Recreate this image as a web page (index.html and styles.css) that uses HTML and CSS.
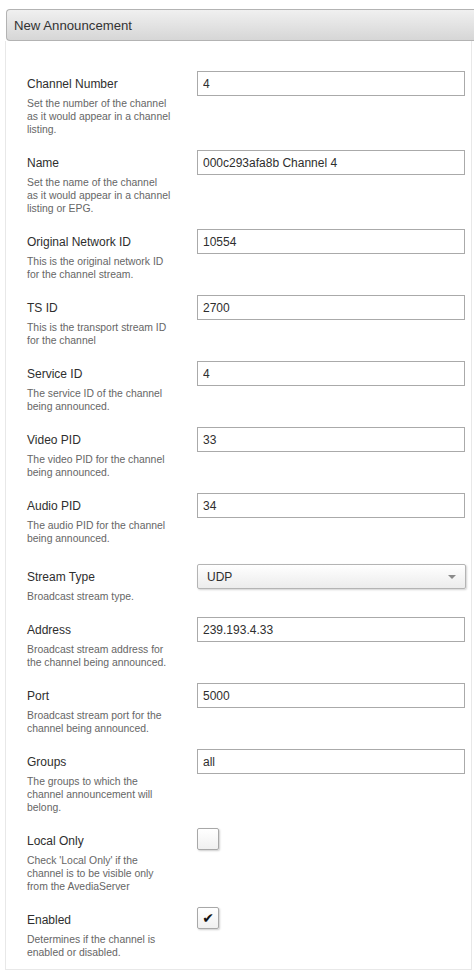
FILE: index.html
```html
<!DOCTYPE html>
<html>
<head>
<meta charset="utf-8">
<link rel="stylesheet" href="styles.css">
</head>
<body>
<div class="page">
  <div class="header">New Announcement</div>
  <div class="panel">
    <div class="row">
      <div class="info"><div class="label">Channel Number</div><div class="desc">Set the number of the channel<br>as it would appear in a channel<br>listing.</div></div>
      <input class="field" type="text" value="4">
    </div>
    <div class="row">
      <div class="info"><div class="label">Name</div><div class="desc">Set the name of the channel<br>as it would appear in a channel<br>listing or EPG.</div></div>
      <input class="field" type="text" value="000c293afa8b Channel 4">
    </div>
    <div class="row">
      <div class="info"><div class="label">Original Network ID</div><div class="desc">This is the original network ID<br>for the channel stream.</div></div>
      <input class="field" type="text" value="10554">
    </div>
    <div class="row">
      <div class="info"><div class="label">TS ID</div><div class="desc">This is the transport stream ID<br>for the channel</div></div>
      <input class="field" type="text" value="2700">
    </div>
    <div class="row">
      <div class="info"><div class="label">Service ID</div><div class="desc">The service ID of the channel<br>being announced.</div></div>
      <input class="field" type="text" value="4">
    </div>
    <div class="row">
      <div class="info"><div class="label">Video PID</div><div class="desc">The video PID for the channel<br>being announced.</div></div>
      <input class="field" type="text" value="33">
    </div>
    <div class="row">
      <div class="info"><div class="label">Audio PID</div><div class="desc">The audio PID for the channel<br>being announced.</div></div>
      <input class="field" type="text" value="34">
    </div>
    <div class="row row-select">
      <div class="info"><div class="label">Stream Type</div><div class="desc">Broadcast stream type.</div></div>
      <div class="select"><span class="select-text">UDP</span><span class="arrow"></span></div>
    </div>
    <div class="row">
      <div class="info"><div class="label">Address</div><div class="desc">Broadcast stream address for<br>the channel being announced.</div></div>
      <input class="field" type="text" value="239.193.4.33">
    </div>
    <div class="row">
      <div class="info"><div class="label">Port</div><div class="desc">Broadcast stream port for the<br>channel being announced.</div></div>
      <input class="field" type="text" value="5000">
    </div>
    <div class="row">
      <div class="info"><div class="label">Groups</div><div class="desc">The groups to which the<br>channel announcement will<br>belong.</div></div>
      <input class="field" type="text" value="all">
    </div>
    <div class="row">
      <div class="info"><div class="label">Local Only</div><div class="desc">Check 'Local Only' if the<br>channel is to be visible only<br>from the AvediaServer</div></div>
      <span class="check"></span>
    </div>
    <div class="row">
      <div class="info"><div class="label">Enabled</div><div class="desc">Determines if the channel is<br>enabled or disabled.</div></div>
      <span class="check">✔</span>
    </div>
  </div>
</div>
</body>
</html>
```

FILE: styles.css
```css
html, body {
  margin: 0;
  padding: 0;
  background: #ffffff;
  overflow: hidden;
  font-family: "Liberation Sans", Arial, sans-serif;
}

.page {
  padding: 9px 0 0 5px;
}

.header {
  height: 32px;
  box-sizing: border-box;
  margin-left: 1px;
  margin-right: -12px;
  border: 1px solid #b3b3b3;
  border-right: none;
  border-radius: 4px 0 0 4px;
  background: linear-gradient(#f0f0f0, #d6d6d6);
  display: flex;
  align-items: center;
  padding-left: 7px;
  font-size: 13.2px;
  color: #333333;
}

.panel {
  width: 467px;
  box-sizing: border-box;
  border: 1px solid #e8e8e8;
  border-top: none;
  padding: 30px 0 10px 21px;
  display: flex;
  flex-direction: column;
  gap: 14px;
}

.row {
  display: flex;
  align-items: flex-start;
}

.row-select {
  margin-top: 5px;
}

.info {
  width: 170px;
  flex: none;
  white-space: nowrap;
}

.label {
  margin-top: 5px;
  font-size: 12px;
  line-height: 16px;
  color: #2e2e2e;
}

.desc {
  margin-top: 5px;
  font-size: 10.4px;
  line-height: 13px;
  color: #666666;
}

.field {
  width: 268px;
  height: 25px;
  box-sizing: border-box;
  margin: 0;
  border: 1px solid #aaaaaa;
  border-radius: 0;
  padding: 0 5px;
  font-family: "Liberation Sans", Arial, sans-serif;
  font-size: 12px;
  color: #2e2e2e;
  background: #ffffff;
  outline: none;
}

.select {
  width: 269px;
  height: 25px;
  box-sizing: border-box;
  border: 1px solid #b4b4b4;
  border-radius: 2px;
  background: linear-gradient(#ffffff, #ececec);
  box-shadow: 1px 1px 2px rgba(0, 0, 0, 0.18);
  display: flex;
  align-items: center;
  justify-content: space-between;
  padding: 0 9px 0 9px;
  font-size: 12px;
  color: #2e2e2e;
}

.arrow {
  width: 0;
  height: 0;
  border-left: 4px solid transparent;
  border-right: 4px solid transparent;
  border-top: 4px solid #8a8a8a;
  margin-top: 1px;
}

.check {
  width: 22px;
  height: 22px;
  box-sizing: border-box;
  border: 1px solid #a8a8a8;
  border-radius: 2px;
  background: linear-gradient(#ffffff, #f0f0f0);
  box-shadow: 1px 1px 2px rgba(0, 0, 0, 0.2);
  display: flex;
  align-items: center;
  justify-content: center;
  font-family: "DejaVu Sans", sans-serif;
  font-size: 14px;
  line-height: 1;
  color: #111111;
}
```
